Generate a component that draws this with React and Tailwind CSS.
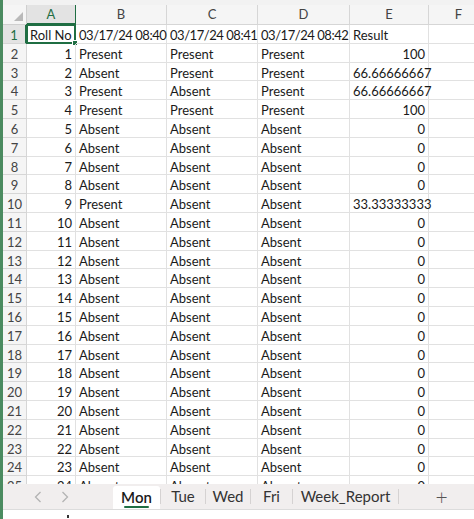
const cols = [
  { key: 'A', w: 49 },
  { key: 'B', w: 91 },
  { key: 'C', w: 91 },
  { key: 'D', w: 92 },
  { key: 'E', w: 79 },
  { key: 'F', w: 60 },
];

const onlyPresentB = [1, 3, 4, 9];
const presentC = [1, 2, 4];
const results = { 1: '100', 2: '66.66666667', 3: '66.66666667', 4: '100', 9: '33.33333333' };

function buildRows() {
  const rows = [['Roll No', '03/17/24 08:40', '03/17/24 08:41', '03/17/24 08:42', 'Result', '']];
  for (let n = 1; n <= 25; n++) {
    rows.push([
      String(n),
      onlyPresentB.includes(n) ? 'Present' : 'Absent',
      presentC.includes(n) ? 'Present' : 'Absent',
      n <= 4 ? 'Present' : 'Absent',
      results[n] || '0',
      '',
    ]);
  }
  return rows;
}

const rows = buildRows();

function Cell({ value, w, right, selected, tight }) {
  return (
    <div
      style={{ width: w }}
      className={`relative shrink-0 overflow-visible whitespace-nowrap border-r border-b border-[#e1e1e1] px-[3px] pt-[1px] leading-[18px] ${right ? 'text-right' : ''} ${tight ? 'tracking-[-0.45px]' : ''}`}
    >
      {value}
      {selected && (
        <div className="absolute -left-px -top-px bottom-[-1px] right-[-1px] border-2 border-[#1f6e43]">
          <div className="absolute -bottom-[4px] -right-[4px] h-[6px] w-[6px] border border-white bg-[#1f6e43]" />
        </div>
      )}
    </div>
  );
}

function Sep() {
  return <div className="my-[5px] w-px shrink-0 bg-[#d5d2d2]" />;
}

export default function App() {
  return (
    <div className="flex h-[519px] w-[474px] flex-col overflow-hidden border-l-[3px] border-[#4b8b60] bg-white font-['Lato','Noto_Sans',sans-serif] text-[13px] text-[#1a1a1a]">
      <div className="h-[484px] overflow-hidden">
        <div className="h-[5px] bg-[#f2f2f2]" />
        <div className="flex h-[20px] bg-[#f5f5f5] text-[13px] text-[#444]">
          <div className="relative w-[24px] shrink-0 border-r border-b border-[#cfcfcf]">
            <div className="absolute bottom-[3px] right-[3px] h-0 w-0 border-b-[9px] border-l-[9px] border-b-[#b9b9b9] border-l-transparent" />
          </div>
          {cols.map((c, i) => (
            <div
              key={c.key}
              style={{ width: c.w }}
              className={`shrink-0 border-r border-b text-center leading-[19px] ${i === 0 ? 'border-b-2 border-b-[#1f6e43] bg-[#e3e3e3] text-[#1f6e43]' : 'border-[#d6d6d6]'}`}
            >
              {c.key}
            </div>
          ))}
        </div>
        {rows.map((r, ri) => (
          <div key={ri} className="flex h-[18.8px]">
            <div
              className={`w-[24px] shrink-0 border-r border-b border-[#d6d6d6] pt-[1px] text-center text-[13px] leading-[18px] ${ri === 0 ? 'border-r-2 border-r-[#1f6e43] bg-[#e3e3e3] text-[#1f6e43]' : 'bg-[#f5f5f5] text-[#444]'}`}
            >
              {ri + 1}
            </div>
            {r.map((v, ci) => (
              <Cell
                key={ci}
                value={v}
                w={cols[ci].w}
                right={ri > 0 && (ci === 0 || ci === 4)}
                selected={ri === 0 && ci === 0}
                tight={ri === 0 && ci >= 1 && ci <= 3}
              />
            ))}
          </div>
        ))}
      </div>
      <div className="flex h-[26px] items-stretch border-b border-[#dcdcdc] bg-[#f1eeee] text-[15px] text-[#333]">
        <div className="flex w-[110px] shrink-0 items-center gap-[19px] pl-[31px]">
          <svg width="8" height="12" viewBox="0 0 8 12" fill="none" stroke="#b3b3b3" strokeWidth="1.3">
            <path d="M6.5 1 L1.5 6 L6.5 11" />
          </svg>
          <svg width="8" height="12" viewBox="0 0 8 12" fill="none" stroke="#b3b3b3" strokeWidth="1.3">
            <path d="M1.5 1 L6.5 6 L1.5 11" />
          </svg>
        </div>
        <div className="mt-[2px] flex w-[47px] shrink-0 flex-col items-center justify-center rounded-t-[3px] bg-white font-semibold text-[#1a1a1a]">
          <span className="leading-[18px]">Mon</span>
          <div className="h-[2px] w-[25px] rounded bg-[#1f6e43]" />
        </div>
        <Sep />
        <div className="flex w-[44px] shrink-0 items-center justify-center">Tue</div>
        <Sep />
        <div className="flex w-[44px] shrink-0 items-center justify-center">Wed</div>
        <Sep />
        <div className="flex w-[41px] shrink-0 items-center justify-center">Fri</div>
        <Sep />
        <div className="flex w-[105px] shrink-0 items-center justify-center">Week_Report</div>
        <Sep />
        <div className="flex flex-1 items-center justify-center pl-[10px] text-[21px] font-light text-[#555]">+</div>
      </div>
      <div className="relative flex-1 bg-white">
        <div className="absolute left-[64px] top-[5px] h-[3px] w-[2px] bg-[#333]" />
      </div>
    </div>
  );
}
